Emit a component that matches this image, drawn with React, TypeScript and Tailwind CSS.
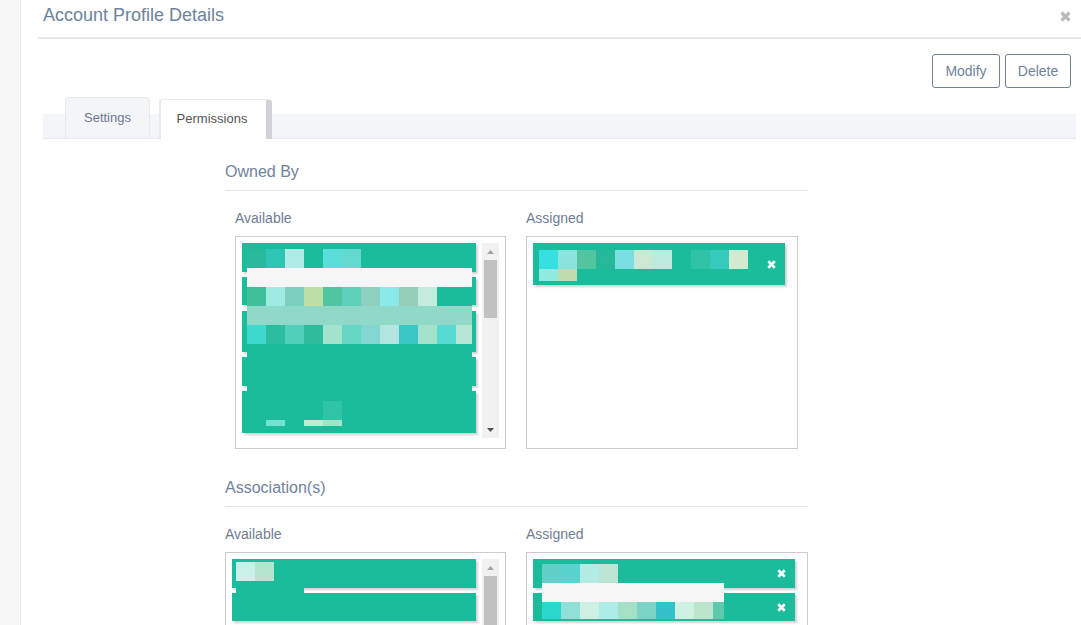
const teal = 'bg-[#1abc9c]';

// redacted text blocks, each cell is 19px wide
const ownedAvailable = [
  ['bg-[#2bb99b]', 'bg-[#2fc5b5]', 'bg-[#b0ece6]', teal, 'bg-[#5bdedb]', 'bg-[#63d9cf]'],
  ['bg-[#f6f6f6]', 'bg-[#f6f6f6]', 'bg-[#f6f6f6]', 'bg-[#f6f6f6]', 'bg-[#f6f6f6]', 'bg-[#f6f6f6]', 'bg-[#f6f6f6]', 'bg-[#f6f6f6]', 'bg-[#f6f6f6]', 'bg-[#f6f6f6]', 'bg-[#f6f6f6]', 'bg-[#f6f6f6]'],
  ['bg-[#40bd99]', 'bg-[#9debe3]', 'bg-[#7bcfbd]', 'bg-[#bce0a8]', 'bg-[#50c59f]', 'bg-[#5fd0ba]', 'bg-[#8fcfc0]', 'bg-[#8aeaea]', 'bg-[#95cfb7]', 'bg-[#c3ecdf]', teal, teal],
  ['bg-[#90d8c8]', 'bg-[#90d8c8]', 'bg-[#90d8c8]', 'bg-[#90d8c8]', 'bg-[#90d8c8]', 'bg-[#90d8c8]', 'bg-[#90d8c8]', 'bg-[#90d8c8]', 'bg-[#90d8c8]', 'bg-[#90d8c8]', 'bg-[#90d8c8]', 'bg-[#90d8c8]'],
  ['bg-[#3fd8cf]', 'bg-[#2bbd9d]', 'bg-[#50d0bb]', 'bg-[#2ebc9c]', 'bg-[#a3e3cd]', 'bg-[#66d7c5]', 'bg-[#83d5d2]', 'bg-[#b3e6e0]', 'bg-[#38c6c6]', 'bg-[#a3e1ca]', 'bg-[#58dad2]', 'bg-[#b4e6d2]'],
  [teal, teal, teal, teal, teal, teal, teal, teal, teal, teal, teal, teal],
  [teal, teal, teal, teal, teal, teal, teal, teal, teal, teal, teal, teal],
  [teal, teal, teal, teal, teal, teal, teal, teal, teal, teal, teal, teal],
  [teal, teal, teal, teal, 'bg-[#2ec4a4]'],
];

const ownedAssigned = [
  ['bg-[#35e0e0]', 'bg-[#8be3de]', 'bg-[#52c5a0]', 'bg-[#25b899]', 'bg-[#7adfe0]', 'bg-[#cae8d3]', 'bg-[#b9ecdf]', teal, 'bg-[#2fc2a4]', 'bg-[#35cabb]', 'bg-[#d2ead0]'],
];

const assocAssigned = [
  ['bg-[#62cfc8]', 'bg-[#59d3d0]', 'bg-[#b3ebe5]', 'bg-[#bde5d3]'],
  ['bg-[#f6f6f6]', 'bg-[#f6f6f6]', 'bg-[#f6f6f6]', 'bg-[#f6f6f6]', 'bg-[#f6f6f6]', 'bg-[#f6f6f6]', 'bg-[#f6f6f6]', 'bg-[#f6f6f6]', 'bg-[#f6f6f6]', 'bg-[#f6f6f6]'],
  ['bg-[#2bd6cc]', 'bg-[#91e0d8]', 'bg-[#cdf0e3]', 'bg-[#aeece8]', 'bg-[#a3e0c6]', 'bg-[#7dd3c6]', 'bg-[#32c2c8]', 'bg-[#cff1e3]', 'bg-[#bde5cb]', 'bg-[#5fc9ae]'],
];

function TimesIcon({ size, className }: { size: number; className: string }) {
  return (
    <svg width={size} height={size} viewBox="0 0 10 10" className={className}>
      <path d="M1.4 1.4 L8.6 8.6 M8.6 1.4 L1.4 8.6" stroke="currentColor" strokeWidth="3" fill="none" />
    </svg>
  );
}

function Cells({ cells, className }: { cells: string[]; className?: string }) {
  return (
    <div className={`flex ${className ?? 'h-[19px]'}`}>
      {cells.map((c, i) => (
        <div key={i} className={`w-[19px] shrink-0 h-full ${c}`} />
      ))}
    </div>
  );
}

function Item({ className, remove }: { className: string; remove?: boolean }) {
  return (
    <div className={`flex items-center justify-end pr-[9px] bg-[#1abc9c] shadow-[2px_2px_2px_rgba(0,0,0,0.18)] ${className}`}>
      {remove && <TimesIcon size={9} className="text-white" />}
    </div>
  );
}

function ScrollBar() {
  return (
    <div className="w-[17px] h-[195px] bg-[#f1f1f1] flex flex-col items-center shrink-0">
      <svg width="9" height="17" viewBox="0 0 9 17" className="shrink-0">
        <path d="M1 11 L4.5 7 L8 11 Z" fill="#a3a3a3" />
      </svg>
      <div className="w-[13px] h-[58px] bg-[#c1c1c1] shrink-0" />
      <div className="flex-1" />
      <svg width="9" height="17" viewBox="0 0 9 17" className="shrink-0">
        <path d="M1 7 L8 7 L4.5 11 Z" fill="#505050" />
      </svg>
    </div>
  );
}

function Heading({ title, className }: { title: string; className: string }) {
  return (
    <h3 className={`h-[32px] pt-px pb-[6px] text-base leading-6 text-[#6f829c] border-b border-[#e1e4e8] ${className}`}>
      {title}
    </h3>
  );
}

function Label({ text }: { text: string }) {
  return <div className="mt-[17px] mb-2 text-sm leading-5 text-[#6f7d92]">{text}</div>;
}

export default function App() {
  return (
    <div className="h-[625px] overflow-hidden flex bg-white font-['Liberation_Sans',Arial,sans-serif]">
      {/* Sidebar edge */}
      <div className="w-[21px] shrink-0 bg-[#f6f6f6] border-r border-[#e7eaec]" />

      <div className="flex-1 min-w-0">
        {/* Header */}
        <div className="ml-[17px] h-[39px] pl-[5px] pr-[10px] flex items-start justify-between border-b-2 border-[#e7eaec]">
          <h2 className="text-lg leading-[30px] text-[#6d829c]">Account Profile Details</h2>
          <TimesIcon size={11} className="mt-[11px] text-[#bbbbbb]" />
        </div>

        {/* Actions */}
        <div className="flex justify-end gap-[5px] mt-[15px] pr-[10px]">
          <button className="w-[68px] h-[34px] rounded-[3px] border border-[#6b8299] text-sm text-[#6f829c]">Modify</button>
          <button className="w-[66px] h-[34px] rounded-[3px] border border-[#6b8299] text-sm text-[#6f829c]">Delete</button>
        </div>

        {/* Tabs */}
        <div className="ml-[22px] mr-[5px] mt-[26px] h-[25px] flex items-end gap-[9px] pl-[22px] bg-[#f4f5f9] border-b border-[#e7eaec]">
          <div className="w-[85px] h-[41px] shrink-0 flex items-center justify-center text-[13px] text-[#6b7890] bg-[#f4f5f9] rounded-t border border-b-0 border-[#e7eaec]">
            Settings
          </div>
          <div className="w-[113px] h-[40px] shrink-0 -mb-px pb-px pr-[3px] flex items-center justify-center text-[13px] text-[#555555] bg-white rounded-t border-t border-l-2 border-r-[6px] border-[#e7eaec] border-r-[#d0d3d8]">
            Permissions
          </div>
        </div>

        {/* Permissions */}
        <div className="ml-[204px] w-[583px]">
          <Heading title="Owned By" className="mt-[20px]" />
          <div className="flex gap-5 pl-[10px]">
            <div>
              <Label text="Available" />
              <div className="w-[271px] h-[213px] p-[6px] flex gap-[6px] border border-[#cccccc]">
                <div className="relative w-[234px] shrink-0 flex flex-col">
                  <Item className="h-[29px] mb-[5px]" />
                  <Item className="h-[28px] mb-[6px]" />
                  <Item className="h-[41px] mb-[5px]" />
                  <Item className="h-[29px] mb-[5px]" />
                  <Item className="h-[42px]" />
                  <div className="absolute left-[5px] top-[6px] w-[225px] overflow-hidden">
                    {ownedAvailable.map((row, i) => (
                      <Cells key={i} cells={row} />
                    ))}
                    <Cells cells={[teal, 'bg-[#72e3d3]', teal, 'bg-[#bdeed3]', 'bg-[#a3e3c8]']} className="h-[6px]" />
                  </div>
                </div>
                <ScrollBar />
              </div>
            </div>
            <div>
              <Label text="Assigned" />
              <div className="w-[272px] h-[213px] p-[6px] border border-[#cccccc]">
                <div className="relative w-[252px]">
                  <Item className="h-[42px]" remove />
                  <div className="absolute left-[6px] top-[7px]">
                    {ownedAssigned.map((row, i) => (
                      <Cells key={i} cells={row} />
                    ))}
                    <Cells cells={['bg-[#8decdf]', 'bg-[#bfddae]']} className="h-[12px]" />
                  </div>
                </div>
              </div>
            </div>
          </div>

          <Heading title="Association(s)" className="mt-[26px]" />
          <div className="flex gap-5">
            <div>
              <Label text="Available" />
              <div className="w-[281px] h-[213px] p-[6px] flex gap-[6px] border border-[#cccccc]">
                <div className="relative w-[244px] shrink-0 flex flex-col">
                  <Item className="h-[29px] mb-[5px]" />
                  <Item className="h-[28px]" />
                  <div className="absolute left-[4px] top-[3px]">
                    <Cells cells={['bg-[#caf0ea]', 'bg-[#b5e5cf]']} />
                    <div className="w-[68px] h-[12px] bg-[#1abc9c]" />
                  </div>
                </div>
                <ScrollBar />
              </div>
            </div>
            <div>
              <Label text="Assigned" />
              <div className="w-[282px] h-[213px] p-[6px] border border-[#cccccc]">
                <div className="relative w-[262px] flex flex-col">
                  <Item className="h-[29px] mb-[5px]" remove />
                  <Item className="h-[28px]" remove />
                  <div className="absolute left-[9px] top-[5px] w-[182px] overflow-hidden">
                    {assocAssigned.map((row, i) => (
                      <Cells key={i} cells={row} className={i === 2 ? 'h-[17px]' : 'h-[19px]'} />
                    ))}
                  </div>
                </div>
              </div>
            </div>
          </div>
        </div>
      </div>
    </div>
  );
}
